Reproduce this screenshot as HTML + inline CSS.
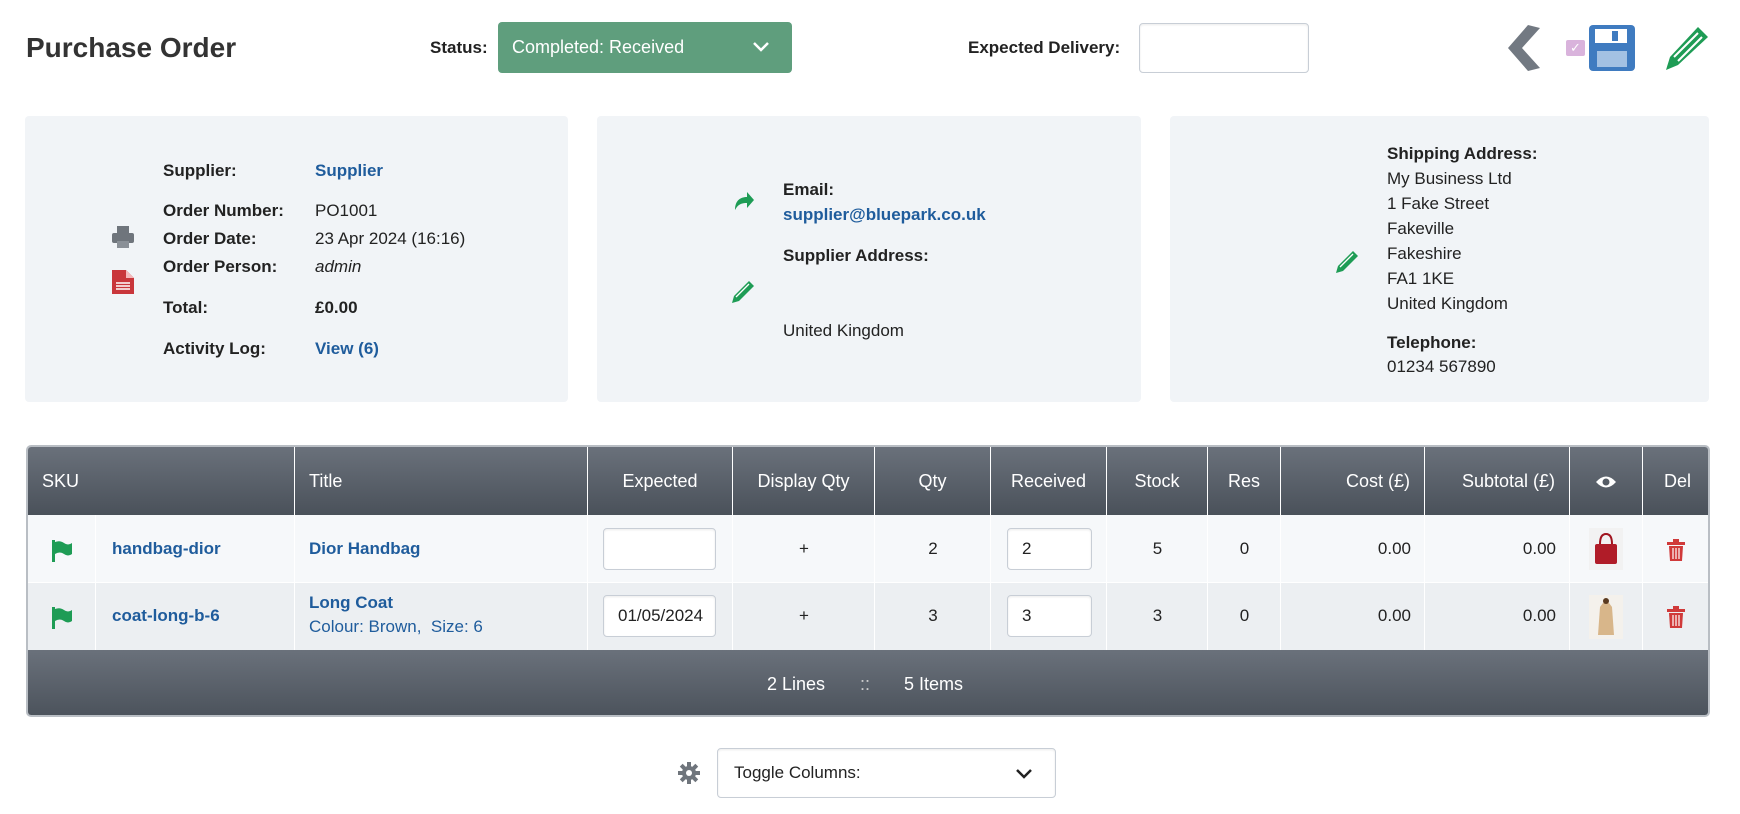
<!DOCTYPE html>
<html><head><meta charset="utf-8"><style>
*{box-sizing:border-box;margin:0;padding:0}
body{width:1740px;height:814px;background:#fff;font-family:"Liberation Sans",sans-serif;font-size:17px;color:#222;position:relative;overflow:hidden}
.a{position:absolute;white-space:nowrap}
.b{font-weight:bold}
.l{color:#1f5c9c}
.panel{position:absolute;top:116px;height:286px;background:#f1f4f7;border-radius:4px}
.inp{position:absolute;background:#fff;border:1px solid #c8ced6;border-radius:4px;box-shadow:inset 0 1px 2px rgba(0,0,0,.08)}
.th{position:absolute;top:0;height:68px;line-height:68px;color:#fff;font-size:18px;border-right:1px solid #fff}
.grad{background:linear-gradient(#6a717b,#4a515a)}
.c{text-align:center}
</style></head><body>
<div class="a b" style="left:26px;top:32px;font-size:28px;color:#333">Purchase Order</div>
<div class="a b" style="left:430px;top:38px;font-size:17px">Status:</div>
<div class="a" style="left:498px;top:22px;width:294px;height:51px;background:#5f9e7d;border-radius:4px;color:#fff;font-size:18px;line-height:51px;padding-left:14px">Completed: Received
<svg style="position:absolute;right:22px;top:19px" width="18" height="12" viewBox="0 0 18 12"><path d="M2 2l7 7 7-7" stroke="#fff" stroke-width="2.5" fill="none"/></svg></div>
<div class="a b" style="left:968px;top:38px">Expected Delivery:</div>
<div class="inp" style="left:1139px;top:23px;width:170px;height:50px"></div>
<svg class="a" style="left:1508px;top:25px" width="34" height="46" viewBox="0 0 34 46"><path d="M20 0L0 23l20 23 12-3L14 23 32 3z" fill="#727982"/></svg>
<div class="a" style="left:1566px;top:40px;width:19px;height:16px;background:#d9b3dc;border-radius:2px;color:#fff;font-size:13px;line-height:16px;text-align:center">✓</div>
<svg class="a" style="left:1589px;top:25px" width="46" height="46" viewBox="0 0 46 46"><rect width="46" height="46" rx="4" fill="#3f7bc0"/><rect x="6" y="4" width="32" height="14" fill="#fff"/><rect x="23" y="6" width="6" height="10" fill="#3f7bc0"/><rect x="8" y="26" width="30" height="16" fill="#a3c1e3"/></svg>
<svg class="a" style="left:1664px;top:25px" width="46" height="46" viewBox="0 0 46 46"><path d="M34 2l10 10L14 40 2 45 6 32z" fill="#1e9c55"/><path d="M10 32l24-24M14 36l24-24" stroke="#fff" stroke-width="2"/></svg>

<div class="panel" style="left:25px;width:543px"></div>
<div class="panel" style="left:597px;width:544px"></div>
<div class="panel" style="left:1170px;width:539px"></div>
<svg class="a" style="left:112px;top:226px" width="22" height="22" viewBox="0 0 22 22"><rect x="5" y="0" width="12" height="7" fill="#6f757c"/><rect x="0" y="7" width="22" height="10" rx="2" fill="#6f757c"/><rect x="5" y="15" width="12" height="7" fill="#8a9097"/></svg>
<svg class="a" style="left:112px;top:270px" width="22" height="24" viewBox="0 0 22 24"><path d="M0 0h14l8 8v16H0z" fill="#c9363b"/><path d="M14 0v8h8" fill="#f4b9bb"/><path d="M4 13h14M4 16h14M4 19h14" stroke="#fff" stroke-width="1.5"/></svg>
<div class="a b" style="left:163px;top:161px">Supplier:</div><div class="a b l" style="left:315px;top:161px">Supplier</div>
<div class="a b" style="left:163px;top:201px">Order Number:</div><div class="a" style="left:315px;top:201px">PO1001</div>
<div class="a b" style="left:163px;top:229px">Order Date:</div><div class="a" style="left:315px;top:229px">23 Apr 2024 (16:16)</div>
<div class="a b" style="left:163px;top:257px">Order Person:</div><div class="a" style="left:315px;top:257px;font-style:italic">admin</div>
<div class="a b" style="left:163px;top:298px">Total:</div><div class="a b" style="left:315px;top:298px">£0.00</div>
<div class="a b" style="left:163px;top:339px">Activity Log:</div><div class="a b l" style="left:315px;top:339px">View (6)</div>

<svg class="a" style="left:733px;top:190px" width="22" height="22" viewBox="0 0 22 22"><path d="M2 20C2 10 8 7 14 7V2l7 8-7 8v-5C9 13 5 14 2 20z" fill="#1e9c55"/></svg>
<div class="a b" style="left:783px;top:180px">Email:</div>
<div class="a b l" style="left:783px;top:205px">supplier@bluepark.co.uk</div>
<div class="a b" style="left:783px;top:246px">Supplier Address:</div>
<svg class="a" style="left:731px;top:280px" width="24" height="24" viewBox="0 0 24 24"><path d="M18 1l5 5L8 21 1 23l2-7z" fill="#1e9c55"/><path d="M5 17l13-13" stroke="#fff" stroke-width="1.3"/></svg>
<div class="a" style="left:783px;top:321px">United Kingdom</div>

<svg class="a" style="left:1335px;top:250px" width="24" height="24" viewBox="0 0 24 24"><path d="M18 1l5 5L8 21 1 23l2-7z" fill="#1e9c55"/><path d="M5 17l13-13" stroke="#fff" stroke-width="1.3"/></svg>
<div class="a" style="left:1387px;top:141px;line-height:25px"><b>Shipping Address:</b><br>My Business Ltd<br>1 Fake Street<br>Fakeville<br>Fakeshire<br>FA1 1KE<br>United Kingdom</div>
<div class="a b" style="left:1387px;top:333px">Telephone:</div>
<div class="a" style="left:1387px;top:357px">01234 567890</div>

<div class="a" style="left:26px;top:445px;width:1684px;height:272px;border:2px solid #b9bec4;border-radius:5px;overflow:hidden">
 <div class="a grad" style="left:0;top:0;width:1684px;height:68px"></div>
 <div class="a" style="left:0;top:68px;width:1684px;height:68px;background:#f6f8fa"></div>
 <div class="a" style="left:0;top:136px;width:1684px;height:67px;background:#eceff2"></div>
 <div class="a grad" style="left:0;top:203px;width:1684px;height:70px"></div>
 <div class="th" style="left:0;width:267px;padding-left:14px">SKU</div>
 <div class="th" style="left:267px;width:293px;padding-left:14px">Title</div>
 <div class="th c" style="left:560px;width:145px">Expected</div>
 <div class="th c" style="left:705px;width:142px">Display Qty</div>
 <div class="th c" style="left:847px;width:116px">Qty</div>
 <div class="th c" style="left:963px;width:116px">Received</div>
 <div class="th c" style="left:1079px;width:101px">Stock</div>
 <div class="th c" style="left:1180px;width:73px">Res</div>
 <div class="th" style="left:1253px;width:144px;text-align:right;padding-right:14px">Cost (£)</div>
 <div class="th" style="left:1397px;width:145px;text-align:right;padding-right:14px">Subtotal (£)</div>
 <div class="th c" style="left:1542px;width:73px"><svg width="20" height="14" viewBox="0 0 20 14" style="vertical-align:middle"><path d="M0 7Q10-4 20 7Q10 18 0 7z" fill="#fff"/><circle cx="10" cy="7" r="3.5" fill="#555c65"/></svg></div>
 <div class="th c" style="left:1615px;width:69px;border:0">Del</div>
 <div class="a" style="left:67px;top:68px;width:1px;height:135px;background:#fff"></div>
 <div class="a" style="left:266px;top:68px;width:1px;height:135px;background:#fff"></div>
 <div class="a" style="left:559px;top:68px;width:1px;height:135px;background:#fff"></div>
 <div class="a" style="left:704px;top:68px;width:1px;height:135px;background:#fff"></div>
 <div class="a" style="left:846px;top:68px;width:1px;height:135px;background:#fff"></div>
 <div class="a" style="left:962px;top:68px;width:1px;height:135px;background:#fff"></div>
 <div class="a" style="left:1078px;top:68px;width:1px;height:135px;background:#fff"></div>
 <div class="a" style="left:1179px;top:68px;width:1px;height:135px;background:#fff"></div>
 <div class="a" style="left:1252px;top:68px;width:1px;height:135px;background:#fff"></div>
 <div class="a" style="left:1396px;top:68px;width:1px;height:135px;background:#fff"></div>
 <div class="a" style="left:1541px;top:68px;width:1px;height:135px;background:#fff"></div>
 <div class="a" style="left:1614px;top:68px;width:1px;height:135px;background:#fff"></div>
 <div class="a" style="left:0;top:135px;width:1684px;height:1px;background:#fff"></div>

 <svg class="a" style="left:24px;top:93px" width="22" height="22" viewBox="0 0 22 22"><rect x="0" y="0" width="3" height="22" fill="#1e9c55"/><path d="M3 2q5-2 9 1t8 0v11q-4 3-8 0t-9 0z" fill="#1e9c55"/></svg>
 <svg class="a" style="left:24px;top:160px" width="22" height="22" viewBox="0 0 22 22"><rect x="0" y="0" width="3" height="22" fill="#1e9c55"/><path d="M3 2q5-2 9 1t8 0v11q-4 3-8 0t-9 0z" fill="#1e9c55"/></svg>
 <div class="a b l" style="left:84px;top:92px">handbag-dior</div>
 <div class="a b l" style="left:84px;top:159px">coat-long-b-6</div>
 <div class="a b l" style="left:281px;top:92px">Dior Handbag</div>
 <div class="a b l" style="left:281px;top:146px">Long Coat</div>
 <div class="a l" style="left:281px;top:170px">Colour: Brown,&nbsp; Size: 6</div>
 <div class="inp" style="left:575px;top:81px;width:113px;height:42px"></div>
 <div class="inp" style="left:575px;top:148px;width:113px;height:42px;overflow:hidden;padding:10px 0 0 14px;font-size:17px">01/05/2024</div>
 <div class="a c" style="left:705px;top:92px;width:142px">+</div>
 <div class="a c" style="left:705px;top:159px;width:142px">+</div>
 <div class="a c" style="left:847px;top:92px;width:116px">2</div>
 <div class="a c" style="left:847px;top:159px;width:116px">3</div>
 <div class="inp" style="left:979px;top:81px;width:85px;height:42px;padding:10px 0 0 14px">2</div>
 <div class="inp" style="left:979px;top:148px;width:85px;height:42px;padding:10px 0 0 14px">3</div>
 <div class="a c" style="left:1079px;top:92px;width:101px">5</div>
 <div class="a c" style="left:1079px;top:159px;width:101px">3</div>
 <div class="a c" style="left:1180px;top:92px;width:73px">0</div>
 <div class="a c" style="left:1180px;top:159px;width:73px">0</div>
 <div class="a" style="left:1253px;top:92px;width:130px;text-align:right">0.00</div>
 <div class="a" style="left:1253px;top:159px;width:130px;text-align:right">0.00</div>
 <div class="a" style="left:1397px;top:92px;width:131px;text-align:right">0.00</div>
 <div class="a" style="left:1397px;top:159px;width:131px;text-align:right">0.00</div>
 <svg class="a" style="left:1561px;top:81px" width="34" height="42" viewBox="0 0 34 42"><rect width="34" height="42" fill="#f2f2f2"/><path d="M11 16q0-10 6-10t6 10" stroke="#a0141f" stroke-width="2" fill="none"/><rect x="6" y="16" width="22" height="20" rx="2" fill="#b01c28"/></svg>
 <svg class="a" style="left:1561px;top:148px" width="34" height="44" viewBox="0 0 34 44"><rect width="34" height="44" fill="#f4f1ec"/><path d="M17 4l-6 8-2 28h16l-2-28z" fill="#d8b68a"/><circle cx="17" cy="6" r="3" fill="#5a3a20"/></svg>
 <svg class="a" style="left:1639px;top:92px" width="18" height="22" viewBox="0 0 18 22"><rect x="0" y="3" width="18" height="3" fill="#d03a3a"/><rect x="6" y="0" width="6" height="3" fill="#d03a3a"/><path d="M2 7h14l-1 15H3z" fill="#d03a3a"/><path d="M6 9v11M9 9v11M12 9v11" stroke="#fff" stroke-width="1.2"/></svg>
 <svg class="a" style="left:1639px;top:159px" width="18" height="22" viewBox="0 0 18 22"><rect x="0" y="3" width="18" height="3" fill="#d03a3a"/><rect x="6" y="0" width="6" height="3" fill="#d03a3a"/><path d="M2 7h14l-1 15H3z" fill="#d03a3a"/><path d="M6 9v11M9 9v11M12 9v11" stroke="#fff" stroke-width="1.2"/></svg>
 <div class="a" style="left:739px;top:227px;color:#fff;font-size:18px">2 Lines</div>
 <div class="a" style="left:832px;top:227px;color:#ccc;font-size:18px">::</div>
 <div class="a" style="left:876px;top:227px;color:#fff;font-size:18px">5 Items</div>
</div>

<svg class="a" style="left:678px;top:762px" width="22" height="22" viewBox="0 0 22 22"><g fill="#6f757c"><circle cx="11" cy="11" r="7"/><rect x="9" y="0" width="4" height="22"/><rect x="0" y="9" width="22" height="4"/><rect x="9" y="0" width="4" height="22" transform="rotate(45 11 11)"/><rect x="9" y="0" width="4" height="22" transform="rotate(-45 11 11)"/></g><circle cx="11" cy="11" r="3" fill="#fff"/></svg>
<div class="inp" style="left:717px;top:748px;width:339px;height:50px;line-height:48px;padding-left:16px;font-size:17px">Toggle Columns:
<svg style="position:absolute;right:22px;top:19px" width="18" height="12" viewBox="0 0 18 12"><path d="M2 2l7 7 7-7" stroke="#222" stroke-width="2.5" fill="none"/></svg></div>
</body></html>
